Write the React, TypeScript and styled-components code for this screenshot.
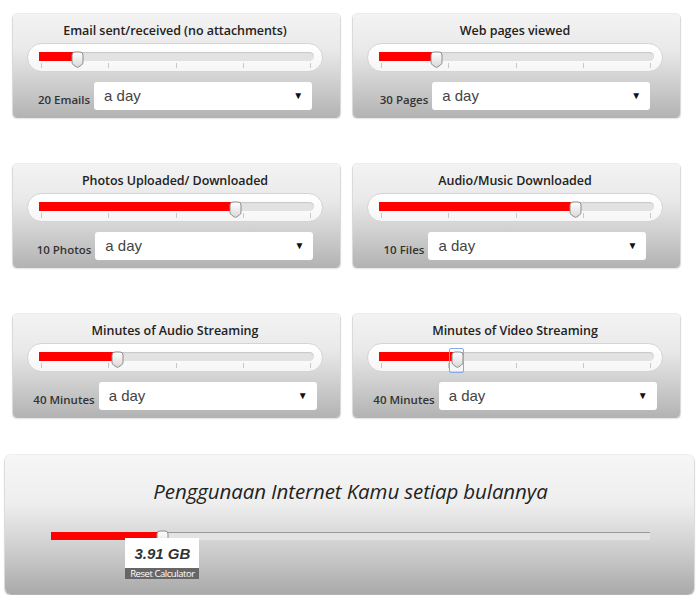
import React from 'react';
import styled, { createGlobalStyle } from 'styled-components';

const GlobalStyle = createGlobalStyle`
    html, body {
        margin: 0;
        padding: 0;
        background: #ffffff;
    }
    body {
        font-family: 'Open Sans', 'Noto Sans', sans-serif;
        color: #222;
    }
`;

const StyledPage = styled.div`
    width: 699px;
    height: 595px;
    overflow: hidden;
    padding: 14px 0 0 0;
    box-sizing: border-box;
`;

const StyledGrid = styled.div`
    display: grid;
    grid-template-columns: 327px 327px;
    column-gap: 13px;
    row-gap: 47px;
    margin-left: 13px;
`;

const StyledCard = styled.section`
    display: flex;
    flex-direction: column;
    height: 103px;
    box-sizing: border-box;
    padding: 9px 17px 6px 14px;
    border-radius: 4px;
    background: linear-gradient(to bottom, #f3f3f3 0%, #e9e9e9 35%, #c4c4c4 80%, #b3b3b3 100%);
    box-shadow: 0 1px 2px rgba(0, 0, 0, 0.35), 0 0 0 1px rgba(0, 0, 0, 0.06);
`;

const StyledCardTitle = styled.h3`
    margin: 0;
    height: 16px;
    line-height: 16px;
    text-align: center;
    font-size: 12.5px;
    font-weight: 600;
    color: #222;
    letter-spacing: -0.05px;
`;

const StyledPill = styled.div`
    position: relative;
    margin-top: 4px;
    height: 29px;
    box-sizing: border-box;
    border-radius: 15px;
    border: 1px solid #d4d4d4;
    background: linear-gradient(to bottom, #ffffff 0%, #f6f6f6 100%);
    padding: 8px 8px 0 11px;
`;

const StyledTrack = styled.div`
    position: relative;
    height: 9px;
    border-radius: 5px;
    background: #e2e2e2;
    box-shadow: inset 0 1px 1px rgba(0, 0, 0, 0.12);
`;

const StyledFill = styled.div`
    height: 100%;
    background: #ff0000;
`;

const StyledTicks = styled.div`
    display: flex;
    justify-content: space-between;
    padding: 2px 3px 0 2px;
`;

const StyledTick = styled.span`
    width: 1px;
    height: 5px;
    background: #c8c8c8;
`;

const StyledHandle = styled.div<{ $big?: boolean }>`
    position: absolute;
    top: ${(p) => (p.$big ? '-3px' : '-1px')};
    width: 14px;
    height: 17px;
    margin-left: -7px;
    display: flex;
    justify-content: center;
`;

const StyledFocusRing = styled.div`
    position: absolute;
    left: -1px;
    top: -3px;
    width: 15px;
    height: 25px;
    box-sizing: border-box;
    border: 1.5px solid #86a9e8;
    border-radius: 2px;
`;

const StyledControlRow = styled.div`
    display: flex;
    justify-content: center;
    align-items: flex-end;
    gap: 4px;
    margin-top: 10px;
    height: 28px;
`;

const StyledAmount = styled.span`
    font-size: 11.5px;
    font-weight: 600;
    color: #333;
    line-height: 1;
    padding-bottom: 5px;
    white-space: nowrap;
`;

const StyledSelect = styled.div`
    display: flex;
    align-items: center;
    justify-content: space-between;
    width: 218px;
    height: 28px;
    box-sizing: border-box;
    padding: 0 9px 1px 10px;
    background: #ffffff;
    border-radius: 3px;
    font-family: 'Liberation Sans', Arial, sans-serif;
    font-size: 15px;
    color: #444;
`;

const StyledArrow = styled.span`
    font-size: 10px;
    color: #111;
`;

const StyledSummary = styled.section`
    position: relative;
    margin: 38px 0 0 5px;
    width: 689px;
    height: 139px;
    box-sizing: border-box;
    padding: 23px 44px 0 46px;
    border-radius: 6px;
    background: linear-gradient(to bottom, #f6f6f6 0%, #eeeeee 35%, #cccccc 70%, #a9a9a9 100%);
    box-shadow: 0 1px 2px rgba(0, 0, 0, 0.35), 0 0 0 1px rgba(0, 0, 0, 0.05);
`;

const StyledSummaryTitle = styled.h2`
    margin: 0;
    height: 26px;
    line-height: 26px;
    text-align: center;
    font-size: 20.5px;
    font-style: italic;
    font-weight: 400;
    color: #222;
    letter-spacing: -0.1px;
`;

const StyledBigTrack = styled.div`
    position: relative;
    margin-top: 28px;
    height: 8px;
    background: #e3e3e3;
    border-top: 1px solid #9a9a9a;
    box-sizing: border-box;
`;

const StyledBigFill = styled.div`
    position: absolute;
    left: 0;
    top: -1px;
    height: 8px;
    background: #ff0000;
`;

const StyledResult = styled.div`
    position: absolute;
    top: 5px;
    width: 74px;
    margin-left: -37px;
    display: flex;
    flex-direction: column;
    background: #ffffff;
`;

const StyledResultValue = styled.div`
    height: 30px;
    line-height: 32px;
    text-align: center;
    font-family: 'Liberation Sans', Arial, sans-serif;
    font-size: 15px;
    font-weight: 700;
    font-style: italic;
    color: #333;
`;

const StyledResetButton = styled.button`
    height: 11px;
    padding: 0;
    border: 0;
    background: #666666;
    color: #ffffff;
    font-family: 'Open Sans', sans-serif;
    font-size: 9.5px;
    line-height: 11px;
    letter-spacing: -0.45px;
    white-space: nowrap;
    overflow: hidden;
    cursor: pointer;
`;

function HandleShape(): JSX.Element {
    return (
        <svg width="13" height="17" viewBox="0 0 13 17">
            <defs>
                <linearGradient id="hg" x1="0" y1="0" x2="0" y2="1">
                    <stop offset="0" stopColor="#ffffff" />
                    <stop offset="1" stopColor="#d9d9d9" />
                </linearGradient>
            </defs>
            <path
                d="M1 4 Q1 1 4 1 H9 Q12 1 12 4 V11 Q12 13 10.5 14 L7.5 16 Q6.5 16.6 5.5 16 L2.5 14 Q1 13 1 11 Z"
                fill="url(#hg)"
                stroke="#8c8c8c"
                strokeWidth="1"
            />
        </svg>
    );
}

interface UsageItem {
    title: string;
    amount: string;
    value: number;
    focused?: boolean;
}

const items: UsageItem[] = [
    { title: 'Email sent/received (no attachments)', amount: '20 Emails', value: 14 },
    { title: 'Web pages viewed', amount: '30 Pages', value: 21 },
    { title: 'Photos Uploaded/ Downloaded', amount: '10 Photos', value: 71.5 },
    { title: 'Audio/Music Downloaded', amount: '10 Files', value: 71.5 },
    { title: 'Minutes of Audio Streaming', amount: '40 Minutes', value: 28.5 },
    { title: 'Minutes of Video Streaming', amount: '40 Minutes', value: 28.5, focused: true },
];

function UsageCard({ item }: { item: UsageItem }): JSX.Element {
    return (
        <StyledCard>
            <StyledCardTitle>{item.title}</StyledCardTitle>
            <StyledPill>
                <StyledTrack>
                    <StyledFill style={{ width: `${item.value}%` }} />
                    <StyledHandle style={{ left: `${item.value}%` }}>
                        <HandleShape />
                        {item.focused && <StyledFocusRing />}
                    </StyledHandle>
                </StyledTrack>
                <StyledTicks>
                    {[0, 1, 2, 3, 4].map((t) => (
                        <StyledTick key={t} />
                    ))}
                </StyledTicks>
            </StyledPill>
            <StyledControlRow>
                <StyledAmount>{item.amount}</StyledAmount>
                <StyledSelect>
                    <span>a day</span>
                    <StyledArrow>▼</StyledArrow>
                </StyledSelect>
            </StyledControlRow>
        </StyledCard>
    );
}

export default function App(): JSX.Element {
    const total = 18.6;
    return (
        <>
            <GlobalStyle />
            <StyledPage>
                <StyledGrid>
                    {items.map((item) => (
                        <UsageCard key={item.title} item={item} />
                    ))}
                </StyledGrid>
                <StyledSummary>
                    <StyledSummaryTitle>Penggunaan Internet Kamu setiap bulannya</StyledSummaryTitle>
                    <StyledBigTrack>
                        <StyledBigFill style={{ width: `${total}%` }} />
                        <StyledHandle $big style={{ left: `${total}%` }}>
                            <HandleShape />
                        </StyledHandle>
                        <StyledResult style={{ left: `${total}%` }}>
                            <StyledResultValue>3.91 GB</StyledResultValue>
                            <StyledResetButton>Reset Calculator</StyledResetButton>
                        </StyledResult>
                    </StyledBigTrack>
                </StyledSummary>
            </StyledPage>
        </>
    );
}
